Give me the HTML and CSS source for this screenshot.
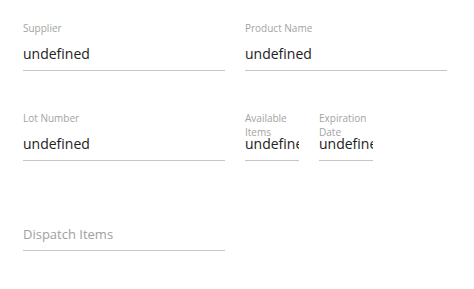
FILE: index.html
```html
<html>
  <head>
    <meta name="viewport" content="width=device-width, initial-scale=1" />
    <link rel="stylesheet" href="styles.css">
  </head>
  <body>
    <div class="form">
      <div class="field">
        <label class="field-label">Supplier</label>
        <div class="field-value">undefined</div>
      </div>
      <div class="field">
        <label class="field-label">Product Name</label>
        <div class="field-value">undefined</div>
      </div>

      <div class="field">
        <label class="field-label">Lot Number</label>
        <div class="field-value">undefined</div>
      </div>
      <div class="field-pair">
        <div class="field small">
          <label class="field-label">Available Items</label>
          <div class="field-value">undefined</div>
        </div>
        <div class="field small">
          <label class="field-label">Expiration Date</label>
          <div class="field-value">undefined</div>
        </div>
      </div>

      <div class="field">
        <label class="field-label"></label>
        <div class="field-value placeholder">Dispatch Items</div>
      </div>
    </div>
  </body>
</html>
```

FILE: styles.css
```css
      body {
        margin: 0;
        background: #fff;
        font-family: "Open Sans", "Noto Sans", sans-serif;
      }
      .form {
        display: grid;
        grid-template-columns: 202px 202px;
        column-gap: 20px;
        row-gap: 40px;
        padding: 21px 0 0 23px;
      }
      .field-pair {
        display: flex;
        gap: 20px;
      }
      .field {
        display: flex;
        flex-direction: column;
        border-bottom: 1px solid #c6c6c6;
        padding-bottom: 6px;
      }
      .field.small {
        width: 54px;
      }
      .field-label {
        display: block;
        height: 14px;
        font-size: 10px;
        line-height: 14px;
        color: #a3a3a3;
      }
      .field-value {
        margin-top: 9px;
        font-size: 14px;
        line-height: 20px;
        color: #222;
        white-space: nowrap;
        overflow: hidden;
      }
      .field-value.placeholder {
        font-size: 13px;
        color: #a0a0a0;
      }
```
